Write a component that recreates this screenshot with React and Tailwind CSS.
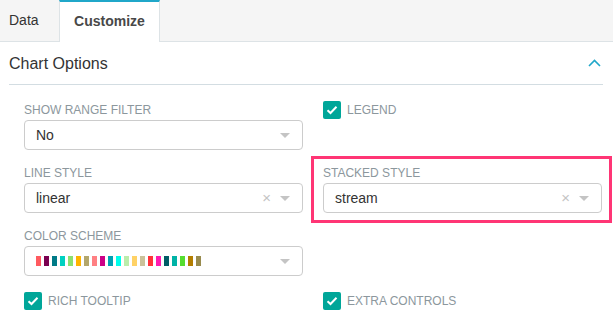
import React from 'react';

const colors = [
  '#ff5a5f', '#7b0051', '#007a87', '#00d1c1', '#8ce071', '#ffb400', '#b4a76c',
  '#ff8083', '#cc0086', '#00a1b3', '#00ffeb', '#bbedab', '#ffd266', '#cbc29a',
  '#ff3339', '#ff1ab1', '#005c66', '#00b3a6', '#55dd30', '#b37e00', '#988b4e',
];

const Caret = () => (
  <span className="ml-[9px] w-0 h-0 border-l-[5px] border-r-[5px] border-t-[5px] border-l-transparent border-r-transparent border-t-[#c4c4c4]" />
);

const Select = ({ children, clearable }) => (
  <div className="h-[30px] border border-[#cccccc] rounded-[4px] bg-white flex items-center pl-[11px] pr-[12px]">
    <div className="flex-1 text-[14px] text-[#333333]">{children}</div>
    {clearable && <span className="text-[15px] leading-none text-[#c4c4c4] mb-[1px]">×</span>}
    <Caret />
  </div>
);

const Field = ({ label, children, clearable }) => (
  <div className="flex flex-col">
    <div className="text-[12px] leading-[14px] text-[#8c979d] mb-[3px]">{label}</div>
    <Select clearable={clearable}>{children}</Select>
  </div>
);

const Check = ({ label }) => (
  <div className="flex items-center h-[18px]">
    <span className="w-[18px] h-[18px] rounded-[2px] bg-[#00a699] flex items-center justify-center">
      <svg width="12" height="10" viewBox="0 0 12 10">
        <path d="M1.5 5.2 L4.5 8 L10.5 1.8" stroke="white" strokeWidth="2" fill="none" />
      </svg>
    </span>
    <span className="ml-[6px] text-[12px] text-[#8c979d]">{label}</span>
  </div>
);

export default function App() {
  return (
    <div className="w-[613px] h-[331px] bg-white overflow-hidden" style={{ fontFamily: '"Liberation Sans", Arial, sans-serif' }}>
      {/* Tabs */}
      <div className="h-[42px] bg-[#f5f5f5] border-b border-[#dde3e6] flex items-end">
        <div className="w-[57px] h-[41px] flex items-center pl-[9px] text-[14px] text-[#333333]">Data</div>
        <div className="ml-[2px] w-[101px] h-[42px] -mb-[1px] bg-white border-t-[2px] border-t-[#20a7c9] border-l border-r border-[#dde3e6] flex items-center justify-center text-[14px] font-bold text-[#484848] pb-[2px]">
          Customize
        </div>
      </div>

      {/* Panel */}
      <div className="pl-[9px] pr-[10px]">
        <div className="h-[43px] border-b border-[#d3dde2] flex items-center justify-between pt-[1px]">
          <span className="text-[16px] text-[#333333]">Chart Options</span>
          <svg width="13" height="8" viewBox="0 0 13 8" className="mr-[2px] mt-[-1px]">
            <path d="M1 7 L6.5 1.5 L12 7" stroke="#20a7c9" strokeWidth="1.6" fill="none" />
          </svg>
        </div>

        <div className="pl-[15px] pr-[1px] pt-[18px] grid grid-cols-2 gap-x-[20px]">
          {/* Row 1 */}
          <div className="mb-[16px]">
            <Field label="SHOW RANGE FILTER">No</Field>
          </div>
          <div className="-mt-[2px]">
            <Check label="LEGEND" />
          </div>

          {/* Row 2 */}
          <div className="mb-[16px]">
            <Field label="LINE STYLE" clearable>linear</Field>
          </div>
          <div className="-ml-[12px] -mr-[10px] -mt-[10px] border-[3px] border-[#ff3575] pl-[9px] pr-[7px] pt-[7px] pb-[7px] self-start">
            <Field label="STACKED STYLE" clearable>stream</Field>
          </div>

          {/* Row 3 */}
          <div className="mb-[16px]">
            <div className="flex flex-col">
              <div className="text-[12px] leading-[14px] text-[#8c979d] mb-[3px]">COLOR SCHEME</div>
              <Select>
                <div className="flex gap-[3px]">
                  {colors.map((c, i) => (
                    <span key={i} className="w-[5px] h-[10px]" style={{ backgroundColor: c }} />
                  ))}
                </div>
              </Select>
            </div>
          </div>
          <div />

          {/* Row 4 */}
          <div>
            <Check label="RICH TOOLTIP" />
          </div>
          <div>
            <Check label="EXTRA CONTROLS" />
          </div>
        </div>
      </div>
    </div>
  );
}
